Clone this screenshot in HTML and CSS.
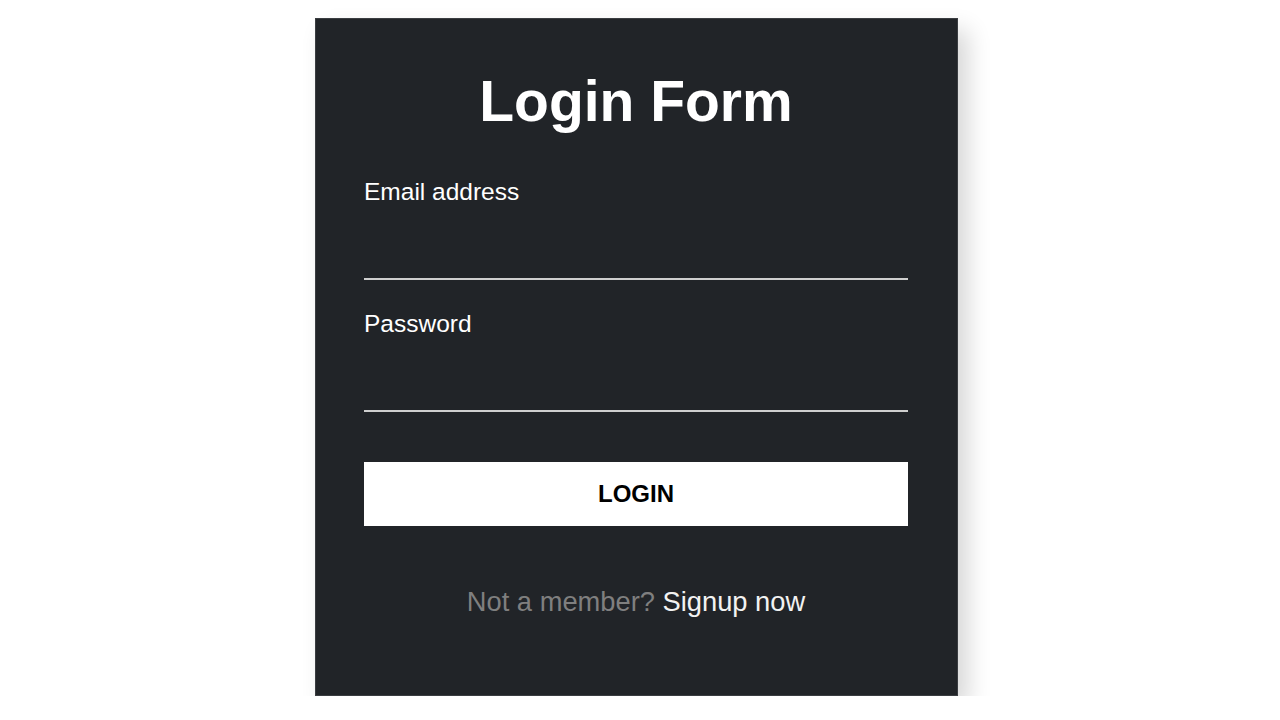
FILE: index.html
```html
<!DOCTYPE html>
<html lang="en">
<head>
<meta charset="utf-8">
<title>Login Form</title>
<link rel="stylesheet" href="styles.css">
</head>
<body>
<div class="page">
  <form class="card">
    <h1 class="title">Login Form</h1>
    <div class="field">
      <label class="label" for="email">Email address</label>
      <input class="input" id="email" type="email">
    </div>
    <div class="field field-second">
      <label class="label" for="password">Password</label>
      <input class="input" id="password" type="password">
    </div>
    <button class="btn" type="button">LOGIN</button>
    <p class="footer"><span class="muted">Not a member?</span> <a class="link" href="#">Signup now</a></p>
  </form>
</div>
</body>
</html>
```
FILE: styles.css
```css
html, body {
  margin: 0;
  padding: 0;
  background: #ffffff;
  font-family: "Liberation Sans", Arial, Helvetica, sans-serif;
}

.page {
  padding-top: 18px;
  padding-left: 315px;
}

.card {
  box-sizing: border-box;
  width: 643px;
  height: 678px;
  background: #212428;
  padding: 54px 49px 80px 48px;
  display: flex;
  flex-direction: column;
  border: 1px solid #3a3d41;
  box-shadow: 10px 12px 22px rgba(0, 0, 0, 0.16);
}

.title {
  margin: 0;
  font-size: 57px;
  line-height: 57px;
  font-weight: 700;
  color: #ffffff;
  text-align: center;
}

.field {
  display: flex;
  flex-direction: column;
  margin-top: 50px;
}

.field-second {
  margin-top: 32px;
}

.label {
  font-size: 24.5px;
  line-height: 24px;
  color: #ffffff;
}

.input {
  box-sizing: border-box;
  height: 76px;
  margin: 0;
  padding: 0;
  background: transparent;
  border: none;
  border-bottom: 2px solid #cfcfcf;
  outline: none;
  color: #ffffff;
  font-family: inherit;
  font-size: 22px;
}

.btn {
  margin-top: 50px;
  height: 64px;
  border: none;
  background: #ffffff;
  color: #000000;
  font-family: inherit;
  font-size: 24px;
  font-weight: 700;
  padding: 0;
  cursor: pointer;
}

.footer {
  margin: 62px 0 0;
  font-size: 27.3px;
  line-height: 27px;
  text-align: center;
}

.muted {
  color: #7f7f7f;
}

.link {
  color: #f2f2f2;
  text-decoration: none;
}
```
